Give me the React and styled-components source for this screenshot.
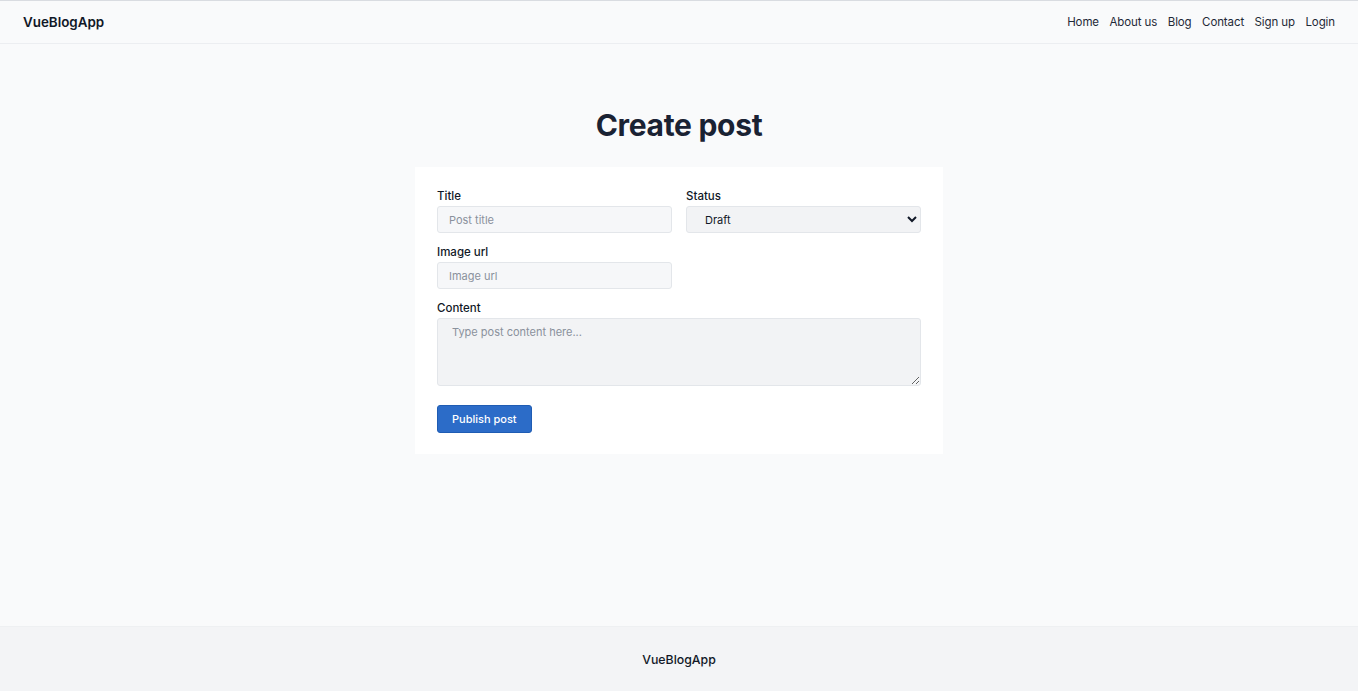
import React from 'react';
import styled, { createGlobalStyle } from 'styled-components';

const GlobalStyle = createGlobalStyle`
  * { box-sizing: border-box; }
  html, body {
    margin: 0;
    padding: 0;
    background: #f9fafb;
    font-family: Inter, "Noto Sans", "Liberation Sans", sans-serif;
    color: #111827;
  }
`;

const Page = styled.div`
  min-height: 691px;
  display: flex;
  flex-direction: column;
`;

const Header = styled.header`
  height: 44px;
  display: flex;
  align-items: center;
  justify-content: space-between;
  padding: 0 23px;
  border-top: 1px solid #d9dce1;
  border-bottom: 1px solid #eceef1;
  background: #f9fafb;
`;

const Logo = styled.a`
  font-size: 13.4px;
  font-weight: 600;
  color: #111827;
  text-decoration: none;
`;

const Nav = styled.nav`
  display: flex;
  gap: 10.5px;
`;

const NavLink = styled.a`
  font-size: 11.5px;
  color: #1f2937;
  text-decoration: none;
  letter-spacing: -0.1px;
`;

const Main = styled.main`
  flex: 1;
  display: flex;
  flex-direction: column;
  align-items: center;
  padding-top: 61px;
`;

const Heading = styled.h1`
  margin: 0 0 22px;
  font-size: 30px;
  line-height: 40px;
  font-weight: 700;
  color: #1a2233;
  letter-spacing: -0.3px;
`;

const Card = styled.form`
  width: 528px;
  background: #fff;
  padding: 21px 22px 21px;
  display: flex;
  flex-direction: column;
`;

const Grid = styled.div`
  display: grid;
  grid-template-columns: 235px 235px;
  column-gap: 14px;
  row-gap: 11px;
`;

const Field = styled.div`
  display: flex;
  flex-direction: column;
  grid-column: ${({ $wide }) => ($wide ? '1 / -1' : 'auto')};
`;

const Label = styled.label`
  font-size: 11.5px;
  line-height: 17px;
  font-weight: 500;
  color: #111827;
  margin-bottom: 1px;
`;

const Input = styled.input`
  height: 27px;
  padding: 0 11px;
  border: 1px solid #e3e6ea;
  border-radius: 3px;
  background: #f6f7f9;
  font-family: inherit;
  font-size: 11px;
  color: #111827;
  outline: none;
  &::placeholder { color: #8a919c; }
`;

const Select = styled.select`
  height: 27px;
  padding: 0 8px 0 14px;
  border: 1px solid #e3e6ea;
  border-radius: 3px;
  background: #f2f3f5;
  font-family: inherit;
  font-size: 11px;
  color: #111827;
  outline: none;
`;

const TextArea = styled.textarea`
  height: 68px;
  padding: 6px 14px;
  border: 1px solid #e3e6ea;
  border-radius: 3px;
  background: #f2f3f5;
  font-family: inherit;
  font-size: 11px;
  color: #111827;
  outline: none;
  resize: vertical;
  &::placeholder { color: #8a919c; }
`;

const Actions = styled.div`
  margin-top: 19px;
`;

const Button = styled.button`
  height: 28px;
  padding: 0 14px;
  border: 1px solid #1f5cb3;
  border-radius: 3px;
  background: #2c6cc8;
  color: #fff;
  font-family: inherit;
  font-size: 11px;
  font-weight: 500;
  cursor: pointer;
`;

const Footer = styled.footer`
  height: 65px;
  display: flex;
  align-items: center;
  justify-content: center;
  background: #f3f4f6;
  border-top: 1px solid #eef0f2;
  font-size: 12.3px;
  font-weight: 500;
  color: #111827;
`;

const links = ['Home', 'About us', 'Blog', 'Contact', 'Sign up', 'Login'];

export default function App() {
  return (
    <Page>
      <GlobalStyle />
      <Header>
        <Logo href="#">VueBlogApp</Logo>
        <Nav>
          {links.map((l) => (
            <NavLink key={l} href="#">{l}</NavLink>
          ))}
        </Nav>
      </Header>
      <Main>
        <Heading>Create post</Heading>
        <Card onSubmit={(e) => e.preventDefault()}>
          <Grid>
            <Field>
              <Label htmlFor="title">Title</Label>
              <Input id="title" placeholder="Post title" />
            </Field>
            <Field>
              <Label htmlFor="status">Status</Label>
              <Select id="status" defaultValue="draft">
                <option value="draft">Draft</option>
                <option value="published">Published</option>
              </Select>
            </Field>
            <Field>
              <Label htmlFor="image">Image url</Label>
              <Input id="image" placeholder="Image url" />
            </Field>
            <div />
            <Field $wide>
              <Label htmlFor="content">Content</Label>
              <TextArea id="content" placeholder="Type post content here..." />
            </Field>
          </Grid>
          <Actions>
            <Button type="submit">Publish post</Button>
          </Actions>
        </Card>
      </Main>
      <Footer>VueBlogApp</Footer>
    </Page>
  );
}
